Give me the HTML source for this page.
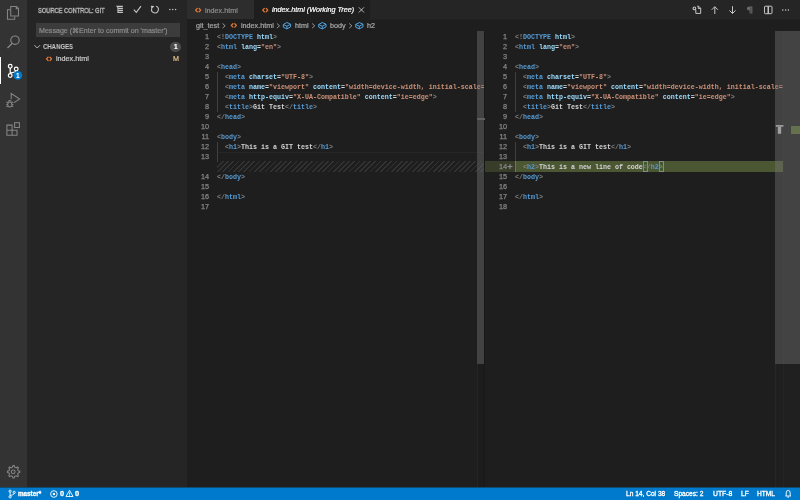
<!DOCTYPE html>
<html><head><meta charset="utf-8"><style>
*{margin:0;padding:0;box-sizing:border-box}
html,body{width:800px;height:500px;overflow:hidden;background:#1e1e1e;font-family:"Liberation Sans",sans-serif;position:relative}
.abs{position:absolute}
#act{position:absolute;left:0;top:0;width:27px;height:487px;background:#333333}
#side{position:absolute;left:27px;top:0;width:160px;height:487px;background:#252526}
#tabs{position:absolute;left:187px;top:0;width:613px;height:19px;background:#252526}
#status{position:absolute;left:0;top:487px;width:800px;height:13px;background:#007acc;color:#fff}
.ln{position:absolute;width:22px;text-align:right;font-family:"Liberation Sans",sans-serif;font-size:7.3px;-webkit-text-stroke-width:0.25px;line-height:10px;height:10px;color:#858585;white-space:pre}
.cl{position:absolute;font-family:"Liberation Mono",monospace;font-size:6.667px;font-weight:bold;line-height:10px;height:10px;color:#d4d4d4;white-space:pre}
.p{color:#808080}.t{color:#569cd6}.a{color:#9cdcfe}.s{color:#ce9178}.x{color:#d4d4d4}
.ui{position:absolute;white-space:pre;line-height:1;will-change:transform;-webkit-text-stroke-width:0.2px}
svg{position:absolute;overflow:visible}
.hatch{background:repeating-linear-gradient(-45deg,#1e1e1e 0,#1e1e1e 2.5px,#333333 2.5px,#333333 3.72px)}

#edL,#edR{will-change:transform}
#status .ui{-webkit-text-stroke-width:0.3px}

</style></head><body>
<div id="act"></div>
<div id="side"></div>
<div id="tabs"></div>
<div class="abs" style="left:370px;top:19px;width:430px;height:1px;background:#222222"></div>
<!-- tabs -->
<div class="abs" style="left:187px;top:0;width:67px;height:19px;background:#2d2d2d"></div>
<div class="ui" style="left:205px;top:6.5px;font-size:7.2px;color:#8d8d8d">index.html</div>
<div class="abs" style="left:254px;top:0;width:116px;height:19px;background:#1e1e1e"></div>
<div class="ui" style="left:271.7px;top:6px;font-size:7.2px;font-style:italic;color:#ffffff">index.html (Working Tree)</div>
<!-- sidebar -->
<div class="ui" style="left:37.9px;top:7px;font-size:7px;color:#bbbbbb;transform:scaleX(0.815);transform-origin:0 0;-webkit-text-stroke-width:0.35px">SOURCE CONTROL: GIT</div>
<div class="abs" style="left:36px;top:23px;width:144px;height:14px;background:#3c3c3c"></div>
<div class="ui" style="left:39px;top:27.8px;font-size:7.1px;color:#8b8b8b">Message (⌘Enter to commit on 'master')</div>
<div class="ui" style="left:43.3px;top:42.6px;font-size:7px;font-weight:bold;color:#cccccc;transform:scaleX(0.86);transform-origin:0 0;-webkit-text-stroke-width:0">CHANGES</div>
<div class="abs" style="left:170.4px;top:41.7px;width:10.5px;height:10.5px;border-radius:50%;background:#4d4d4d"></div>
<div class="ui" style="left:173.5px;top:43.5px;font-size:6.5px;font-weight:bold;color:#ffffff">1</div>
<div class="ui" style="left:56px;top:55px;font-size:7.2px;color:#cccccc">index.html</div>
<div class="ui" style="left:172.6px;top:55.2px;font-size:7.2px;color:#e2c08d">M</div>
<!-- breadcrumbs -->
<div class="ui" style="left:196px;top:22px;font-size:7.2px;color:#a9a9a9">git_test</div>
<div class="ui" style="left:240.5px;top:22px;font-size:7.2px;color:#a9a9a9">index.html</div>
<div class="ui" style="left:294.5px;top:22px;font-size:7.2px;color:#a9a9a9">html</div>
<div class="ui" style="left:330px;top:22px;font-size:7.2px;color:#a9a9a9">body</div>
<div class="ui" style="left:367px;top:22px;font-size:7.2px;color:#a9a9a9">h2</div>
<!-- left editor -->
<div id="edL" class="abs" style="left:187px;top:31px;width:298px;height:456px;overflow:hidden">
  <div class="abs" style="left:30px;top:121px;width:268px;height:1px;background:#262626"></div>
  <div class="abs hatch" style="left:30px;top:130px;width:268px;height:11px"></div>
  <div class="abs" style="left:30px;top:40.5px;width:1px;height:40px;background:#404040"></div>
  <div class="abs" style="left:30px;top:110.5px;width:1px;height:20px;background:#404040"></div>
  <div class="ln" style="left:0px;top:0.5px">1</div>
<div class="cl" style="left:30px;top:0.5px"><span class="p">&lt;!</span><span class="t">DOCTYPE</span> <span class="a">html</span><span class="p">&gt;</span></div>
<div class="ln" style="left:0px;top:10.5px">2</div>
<div class="cl" style="left:30px;top:10.5px"><span class="p">&lt;</span><span class="t">html</span> <span class="a">lang</span><span class="x">=</span><span class="s">&quot;en&quot;</span><span class="p">&gt;</span></div>
<div class="ln" style="left:0px;top:20.5px">3</div>
<div class="ln" style="left:0px;top:30.5px">4</div>
<div class="cl" style="left:30px;top:30.5px"><span class="p">&lt;</span><span class="t">head</span><span class="p">&gt;</span></div>
<div class="ln" style="left:0px;top:40.5px">5</div>
<div class="cl" style="left:30px;top:40.5px"><span class="x">  </span><span class="p">&lt;</span><span class="t">meta</span> <span class="a">charset</span><span class="x">=</span><span class="s">&quot;UTF-8&quot;</span><span class="p">&gt;</span></div>
<div class="ln" style="left:0px;top:50.5px">6</div>
<div class="cl" style="left:30px;top:50.5px"><span class="x">  </span><span class="p">&lt;</span><span class="t">meta</span> <span class="a">name</span><span class="x">=</span><span class="s">&quot;viewport&quot;</span> <span class="a">content</span><span class="x">=</span><span class="s">&quot;width=device-width, initial-scale=1.0&quot;</span><span class="p">&gt;</span></div>
<div class="ln" style="left:0px;top:60.5px">7</div>
<div class="cl" style="left:30px;top:60.5px"><span class="x">  </span><span class="p">&lt;</span><span class="t">meta</span> <span class="a">http-equiv</span><span class="x">=</span><span class="s">&quot;X-UA-Compatible&quot;</span> <span class="a">content</span><span class="x">=</span><span class="s">&quot;ie=edge&quot;</span><span class="p">&gt;</span></div>
<div class="ln" style="left:0px;top:70.5px">8</div>
<div class="cl" style="left:30px;top:70.5px"><span class="x">  </span><span class="p">&lt;</span><span class="t">title</span><span class="p">&gt;</span><span class="x">Git Test</span><span class="p">&lt;/</span><span class="t">title</span><span class="p">&gt;</span></div>
<div class="ln" style="left:0px;top:80.5px">9</div>
<div class="cl" style="left:30px;top:80.5px"><span class="p">&lt;/</span><span class="t">head</span><span class="p">&gt;</span></div>
<div class="ln" style="left:0px;top:90.5px">10</div>
<div class="ln" style="left:0px;top:100.5px">11</div>
<div class="cl" style="left:30px;top:100.5px"><span class="p">&lt;</span><span class="t">body</span><span class="p">&gt;</span></div>
<div class="ln" style="left:0px;top:110.5px">12</div>
<div class="cl" style="left:30px;top:110.5px"><span class="x">  </span><span class="p">&lt;</span><span class="t">h1</span><span class="p">&gt;</span><span class="x">This is a GIT test</span><span class="p">&lt;/</span><span class="t">h1</span><span class="p">&gt;</span></div>
<div class="ln" style="left:0px;top:120.5px">13</div>
<div class="ln" style="left:0px;top:140.5px">14</div>
<div class="cl" style="left:30px;top:140.5px"><span class="p">&lt;/</span><span class="t">body</span><span class="p">&gt;</span></div>
<div class="ln" style="left:0px;top:150.5px">15</div>
<div class="ln" style="left:0px;top:160.5px">16</div>
<div class="cl" style="left:30px;top:160.5px"><span class="p">&lt;/</span><span class="t">html</span><span class="p">&gt;</span></div>
<div class="ln" style="left:0px;top:170.5px">17</div>
  <div class="abs" style="left:290px;top:333px;width:7px;height:123px;background:#1c1c1c;border-left:1px solid #252525"></div>
  <div class="abs" style="left:290px;top:0;width:7px;height:333px;background:rgba(121,121,121,0.4)"></div>
  <div class="abs" style="left:297px;top:0;width:1px;height:456px;background:#181818"></div>
  <div class="abs" style="left:290px;top:87px;width:7.5px;height:2px;background:#606060"></div>
</div>
<!-- right editor -->
<div id="edR" class="abs" style="left:485px;top:31px;width:298px;height:456px;overflow:hidden">
  <div class="abs" style="left:0;top:130px;width:298.5px;height:11px;background:#373d29"></div>
  <div class="abs" style="left:30px;top:130px;width:268.5px;height:11px;background:#4b5632"></div>
  <div class="abs" style="left:30px;top:40.5px;width:1px;height:40px;background:#404040"></div>
  <div class="abs" style="left:30px;top:110.5px;width:1px;height:20px;background:#404040"></div>
  <div class="abs" style="left:30px;top:130px;width:1px;height:11px;background:#6f7a55"></div>
  <div class="abs" style="left:158px;top:130px;width:4.5px;height:11px;border:1px solid #8a8a8a;background:#3f5a2e"></div>
  <div class="abs" style="left:174px;top:130px;width:4.5px;height:11px;border:1px solid #8a8a8a;background:#3f5a2e"></div>
  <div class="ln" style="left:0px;top:0.5px">1</div>
<div class="cl" style="left:30px;top:0.5px"><span class="p">&lt;!</span><span class="t">DOCTYPE</span> <span class="a">html</span><span class="p">&gt;</span></div>
<div class="ln" style="left:0px;top:10.5px">2</div>
<div class="cl" style="left:30px;top:10.5px"><span class="p">&lt;</span><span class="t">html</span> <span class="a">lang</span><span class="x">=</span><span class="s">&quot;en&quot;</span><span class="p">&gt;</span></div>
<div class="ln" style="left:0px;top:20.5px">3</div>
<div class="ln" style="left:0px;top:30.5px">4</div>
<div class="cl" style="left:30px;top:30.5px"><span class="p">&lt;</span><span class="t">head</span><span class="p">&gt;</span></div>
<div class="ln" style="left:0px;top:40.5px">5</div>
<div class="cl" style="left:30px;top:40.5px"><span class="x">  </span><span class="p">&lt;</span><span class="t">meta</span> <span class="a">charset</span><span class="x">=</span><span class="s">&quot;UTF-8&quot;</span><span class="p">&gt;</span></div>
<div class="ln" style="left:0px;top:50.5px">6</div>
<div class="cl" style="left:30px;top:50.5px"><span class="x">  </span><span class="p">&lt;</span><span class="t">meta</span> <span class="a">name</span><span class="x">=</span><span class="s">&quot;viewport&quot;</span> <span class="a">content</span><span class="x">=</span><span class="s">&quot;width=device-width, initial-scale=1.0&quot;</span><span class="p">&gt;</span></div>
<div class="ln" style="left:0px;top:60.5px">7</div>
<div class="cl" style="left:30px;top:60.5px"><span class="x">  </span><span class="p">&lt;</span><span class="t">meta</span> <span class="a">http-equiv</span><span class="x">=</span><span class="s">&quot;X-UA-Compatible&quot;</span> <span class="a">content</span><span class="x">=</span><span class="s">&quot;ie=edge&quot;</span><span class="p">&gt;</span></div>
<div class="ln" style="left:0px;top:70.5px">8</div>
<div class="cl" style="left:30px;top:70.5px"><span class="x">  </span><span class="p">&lt;</span><span class="t">title</span><span class="p">&gt;</span><span class="x">Git Test</span><span class="p">&lt;/</span><span class="t">title</span><span class="p">&gt;</span></div>
<div class="ln" style="left:0px;top:80.5px">9</div>
<div class="cl" style="left:30px;top:80.5px"><span class="p">&lt;/</span><span class="t">head</span><span class="p">&gt;</span></div>
<div class="ln" style="left:0px;top:90.5px">10</div>
<div class="ln" style="left:0px;top:100.5px">11</div>
<div class="cl" style="left:30px;top:100.5px"><span class="p">&lt;</span><span class="t">body</span><span class="p">&gt;</span></div>
<div class="ln" style="left:0px;top:110.5px">12</div>
<div class="cl" style="left:30px;top:110.5px"><span class="x">  </span><span class="p">&lt;</span><span class="t">h1</span><span class="p">&gt;</span><span class="x">This is a GIT test</span><span class="p">&lt;/</span><span class="t">h1</span><span class="p">&gt;</span></div>
<div class="ln" style="left:0px;top:120.5px">13</div>
<div class="ln" style="left:0px;top:130.5px">14</div>
<div class="cl" style="left:30px;top:130.5px"><span class="x">  </span><span class="p">&lt;</span><span class="t">h2</span><span class="p">&gt;</span><span class="x">This is a new line of code</span><span class="p">&lt;/</span><span class="t">h2</span><span class="p">&gt;</span></div>
<div class="ln" style="left:0px;top:140.5px">15</div>
<div class="cl" style="left:30px;top:140.5px"><span class="p">&lt;/</span><span class="t">body</span><span class="p">&gt;</span></div>
<div class="ln" style="left:0px;top:150.5px">16</div>
<div class="ln" style="left:0px;top:160.5px">17</div>
<div class="cl" style="left:30px;top:160.5px"><span class="p">&lt;/</span><span class="t">html</span><span class="p">&gt;</span></div>
<div class="ln" style="left:0px;top:170.5px">18</div>
</div>
<!-- right scrollbar + diff overview -->
<div class="abs" style="left:775px;top:364px;width:8px;height:123px;background:#1f1f1f;border-left:1px solid #262626"></div>
<div class="abs" style="left:783px;top:31px;width:17px;height:456px;background:#202020;border-left:1px solid #242424"></div>
<div class="abs" style="left:775px;top:31px;width:25px;height:333px;background:rgba(121,121,121,0.4)"></div>
<div class="abs" style="left:791.3px;top:126px;width:8.7px;height:7.5px;background:#64714c"></div>
<div id="status" style="will-change:transform">
  <div class="abs" style="left:0;top:0;width:800px;height:1px;background:#0f4c75"></div>
  <div class="ui" style="left:18px;top:4px;font-size:6.3px;font-weight:bold">master*</div>
  <div class="ui" style="left:59.8px;top:2.9px;font-size:7.4px;font-weight:bold">0</div>
  <div class="ui" style="left:74.8px;top:2.9px;font-size:7.4px;font-weight:bold">0</div>
  <div class="ui" style="left:626px;top:4px;font-size:6.6px">Ln 14, Col 38</div>
  <div class="ui" style="left:674px;top:4px;font-size:6.6px">Spaces: 2</div>
  <div class="ui" style="left:712.5px;top:4px;font-size:6.85px">UTF-8</div>
  <div class="ui" style="left:741px;top:4px;font-size:6.6px">LF</div>
  <div class="ui" style="left:757px;top:4px;font-size:6.6px">HTML</div>
</div>
<svg width="800" height="500" style="left:0;top:0;will-change:transform" viewBox="0 0 800 500">
  <defs>
    <g id="fi"><path d="M2.3 0.6 L0.7 2.3 L2.3 4.0 M4.2 0.6 L5.8 2.3 L4.2 4.0" fill="none" stroke="#e37933" stroke-width="1.3" stroke-linecap="round" stroke-linejoin="round"/></g>
    <g id="cube" fill="none" stroke="#4fa3e0" stroke-width="1"><path d="M0.7 2.6 L4.3 0.6 L8 2.3 V5 L4.3 7 L0.7 5.3 Z M0.7 2.6 L4.3 4.3 L8 2.4 M4.3 4.3 V7"/></g>
    <g id="chev"><path d="M0.3 0.3 L3 2.6 L0.3 4.9" fill="none" stroke="#a0a0a0" stroke-width="0.9"/></g>
  </defs>
  <!-- activity bar -->
  <rect x="0" y="57" width="1" height="27" fill="#fff"/>
  <g fill="none" stroke="#858585" stroke-width="1.05">
    <path d="M10.2 9.8 H7.5 V19.3 H14.7 V16.4"/>
    <path d="M10.7 6.5 H16.5 L18.5 8.5 V15.9 H10.7 Z"/>
    <path d="M16.3 6.5 V8.7 H18.5"/>
    <circle cx="15" cy="40.2" r="4.2" stroke-width="1.2"/>
    <path d="M12 43.4 L7.5 47.9" stroke-width="1.4"/>
    <path d="M11.2 99.3 V93.5 L19.6 99 L14.1 102.6"/>
    <rect x="14.6" y="122.7" width="4.8" height="4.8"/>
    <path d="M6.9 125.1 H12.1 V130.3 H17 V135.3 H6.9 Z M6.9 130.3 H12.1 V135.3"/>
    <circle cx="13.2" cy="471.8" r="1.9"/>
    <path d="M13.2 465.6 l1 0 .5 1.6 1.4 .6 1.5-.8 .8 .8 -.8 1.5 .6 1.4 1.6 .5 0 1.2 -1.6 .5 -.6 1.4 .8 1.5 -.8 .8 -1.5-.8 -1.4 .6 -.5 1.6 -1.2 0 -.5-1.6 -1.4-.6 -1.5 .8 -.8-.8 .8-1.5 -.6-1.4 -1.6-.5 0-1.2 1.6-.5 .6-1.4 -.8-1.5 .8-.8 1.5 .8 1.4-.6 .5-1.6 Z"/>
  </g>
  <!-- bug -->
  <g fill="none" stroke="#858585" stroke-width="1.05">
    <ellipse cx="9.8" cy="104.4" rx="2.1" ry="2.5"/>
    <path d="M8.3 101.4 Q9.8 99.7 11.3 101.4"/>
    <path d="M6.3 101.9 L7.8 102.6 M13.3 101.9 L11.8 102.6 M6.2 104.4 H7.7 M13.4 104.4 H11.9 M6.3 106.9 L7.9 106 M13.3 106.9 L11.7 106"/>
  </g>
  <!-- scm (active) -->
  <g fill="none" stroke="#ffffff" stroke-width="1.25">
    <circle cx="10.2" cy="66.3" r="1.85"/>
    <circle cx="10.2" cy="75.4" r="1.85"/>
    <circle cx="16.2" cy="68.9" r="1.85"/>
    <path d="M10.2 68.1 V73.6 M16.2 70.7 C16.2 72.5 12 72.5 10.2 73.2"/>
  </g>
  <circle cx="17.8" cy="75.4" r="4.4" fill="#007acc"/>
  <text x="17.9" y="77.7" font-size="6.6" font-weight="bold" fill="#fff" text-anchor="middle" font-family="Liberation Sans">1</text>
  <!-- sidebar actions -->
  <g fill="#c5c5c5">
    <path d="M115.8 5.8 H122.9 V7.2 H118.4 V7.9 H122.9 V9.2 H118.4 V10 H122.9 V11.3 H118.4 V11.9 H122.9 V13 H117.4 V7.6 Z"/>
  </g>
  <g fill="none" stroke="#c5c5c5" stroke-width="1.1">
    <path d="M133.8 9.6 L136.3 12.3 L141 6.1"/>
    <path d="M156.1 6.3 A3.4 3.4 0 1 1 151.7 8.6"/>
  </g>
  <path d="M150.9 5.8 L154.4 6.1 L151.4 9.3 Z" fill="#c5c5c5"/>
  <g fill="#c5c5c5"><circle cx="169.9" cy="9.4" r="0.75"/><circle cx="172.75" cy="9.4" r="0.75"/><circle cx="175.6" cy="9.4" r="0.75"/></g>
  <path d="M34.4 45.2 L37.2 48 L40 45.2" fill="none" stroke="#c5c5c5" stroke-width="0.9"/>
  <use href="#fi" x="45.8" y="56.6"/>
  <!-- tabs -->
  <use href="#fi" x="194.9" y="7.8"/>
  <use href="#fi" x="262" y="7.8"/>
  <path d="M358.8 7.3 L364 12.5 M364 7.3 L358.8 12.5" stroke="#c5c5c5" stroke-width="0.9"/>
  <!-- editor actions -->
  <g fill="none" stroke="#c5c5c5" stroke-width="1">
    <path d="M695.8 9.8 V13.4 H700.7 V8.3 L698.6 6.2 H697.2"/>
    <path d="M698.3 6.3 V8.5 H700.6"/>
    <circle cx="694.4" cy="8.4" r="1.35" stroke-width="1.1"/>
    <path d="M714.8 14 V6.8 M711.7 9.8 L714.8 6.7 L717.9 9.8"/>
    <path d="M732.5 6.2 V13.4 M729.4 10.4 L732.5 13.5 L735.6 10.4"/>
    <rect x="764.5" y="6.2" width="7.5" height="7.5" rx="0.8"/>
    <path d="M768.25 6.2 V13.7" stroke-width="1.5"/>
  </g>
  <g fill="#6a6a6a"><path d="M750.2 6.4 H752.4 V13.6 H751.2 V7.4 H750.6 V13.6 H749.6 V10.4 Q746.8 10.2 746.8 8.4 Q746.8 6.4 750.2 6.4 Z"/></g>
  <g fill="#c5c5c5"><circle cx="782.8" cy="9.9" r="0.75"/><circle cx="785.6" cy="9.9" r="0.75"/><circle cx="788.4" cy="9.9" r="0.75"/></g>
  <!-- breadcrumbs -->
  <use href="#chev" x="222.2" y="23.2"/>
  <use href="#fi" x="230.6" y="23.1"/>
  <use href="#chev" x="276.6" y="23.2"/>
  <use href="#cube" x="282.6" y="21.9"/>
  <use href="#chev" x="311.8" y="23.2"/>
  <use href="#cube" x="318" y="21.9"/>
  <use href="#chev" x="348.9" y="23.2"/>
  <use href="#cube" x="355" y="21.9"/>
  <path d="M507.5 166.6 H512.5 M510 164.1 V169.1" stroke="#9a9a9a" stroke-width="0.9"/>
  <!-- overview cursor T -->
  <rect x="775.8" y="125" width="7.6" height="1.8" fill="#9a9a9a"/>
  <rect x="777.8" y="126.8" width="3.4" height="7" fill="#a0a0a0"/>
  <!-- status bar icons -->
  <g fill="none" stroke="#ffffff" stroke-width="0.9">
    <circle cx="10.1" cy="491.2" r="1.1"/>
    <circle cx="10.1" cy="496.8" r="1.1"/>
    <circle cx="14.2" cy="492.3" r="1.1"/>
    <path d="M10.1 492.3 V495.7 M14.2 493.4 C14.2 495 11 494.8 10.1 495.8"/>
    <circle cx="53.9" cy="494" r="3.3"/>
    <path d="M69.5 490.3 L73 496.5 H66 Z"/>
    <path d="M69.5 492.5 V494.6"/>
    <path d="M785.4 496 H791 M786.2 496 V493 Q786.2 490.4 788.2 490.4 Q790.2 490.4 790.2 493 V496"/>
  </g>
  <circle cx="53.9" cy="494" r="1.2" fill="#fff"/>
  <rect x="69.05" y="495.3" width="0.9" height="0.8" fill="#fff"/>
  <rect x="787.4" y="496.6" width="1.6" height="1" fill="#fff"/>
</svg>

</body></html>
